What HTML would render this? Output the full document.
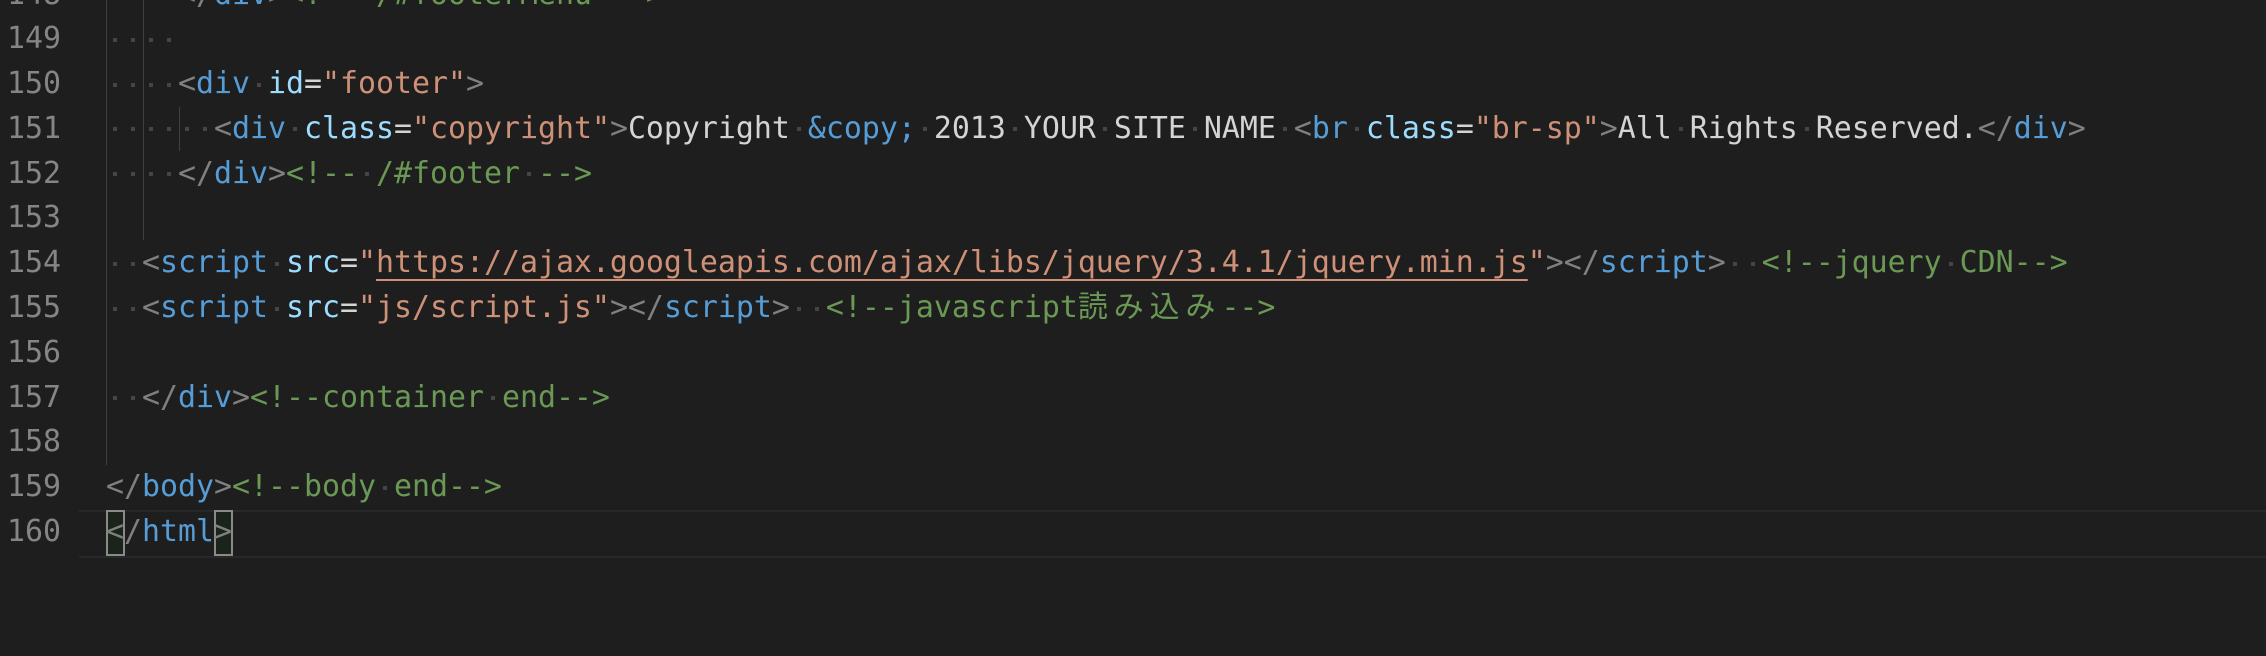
<!DOCTYPE html>
<html><head><meta charset="utf-8">
<style>
html,body{margin:0;padding:0;background:#1e1e1e;width:2266px;height:656px;overflow:hidden;}
.ed{position:absolute;left:0;top:-27.5px;width:2266px;font-family:"DejaVu Sans Mono","Noto Sans CJK JP",monospace;font-size:29.9px;line-height:44.8px;}
.ln{position:absolute;left:0;width:61px;text-align:right;color:#858585;}
.code{position:absolute;left:106px;color:#d4d4d4;}
.l{height:44.8px;white-space:pre;}
.s{display:inline-block;width:18px;height:20px;background:linear-gradient(#454545,#454545) no-repeat center/4px 4px;vertical-align:middle;}
.t{color:#569cd6}.a{color:#9cdcfe}.v{color:#ce9178}.c{color:#6a9955}.p{color:#808080}
.u{text-decoration:underline;text-decoration-color:#ce9178;text-underline-offset:7px;text-decoration-thickness:2px;}
.j{letter-spacing:6px;}
.g{position:absolute;width:1px;background:#404040;}
.cur{position:absolute;left:79px;right:0;top:510px;height:44px;border-top:2px solid #282828;border-bottom:2px solid #282828;}
.bb{position:absolute;top:510px;height:42px;border:2px solid #8a8a8a;background:#1b241b;box-sizing:content-box;}
</style></head><body>
<div class="cur"></div>
<div class="bb" style="left:106px;width:15px"></div>
<div class="bb" style="left:214px;width:15px"></div>
<div class="g" style="left:106px;top:0;height:465px"></div>
<div class="g" style="left:143px;top:0;height:240px"></div>
<div class="g" style="left:179px;top:107px;height:44px"></div>
<div class="ed">
<div class="ln"><div class="l">148</div><div class="l">149</div><div class="l">150</div><div class="l">151</div><div class="l">152</div><div class="l">153</div><div class="l">154</div><div class="l">155</div><div class="l">156</div><div class="l">157</div><div class="l">158</div><div class="l">159</div><div class="l">160</div></div>
<div class="code">
<div class="l"><span class="s"></span><span class="s"></span><span class="s"></span><span class="s"></span><span class="p">&lt;/</span><span class="t">div</span><span class="p">&gt;</span><span class="c">&lt;!--<span class="s"></span>/#footerMenu<span class="s"></span>--&gt;</span></div>
<div class="l"><span class="s"></span><span class="s"></span><span class="s"></span><span class="s"></span></div>
<div class="l"><span class="s"></span><span class="s"></span><span class="s"></span><span class="s"></span><span class="p">&lt;</span><span class="t">div</span><span class="s"></span><span class="a">id</span>=<span class="v">"footer"</span><span class="p">&gt;</span></div>
<div class="l"><span class="s"></span><span class="s"></span><span class="s"></span><span class="s"></span><span class="s"></span><span class="s"></span><span class="p">&lt;</span><span class="t">div</span><span class="s"></span><span class="a">class</span>=<span class="v">"copyright"</span><span class="p">&gt;</span>Copyright<span class="s"></span><span class="t">&amp;copy;</span><span class="s"></span>2013<span class="s"></span>YOUR<span class="s"></span>SITE<span class="s"></span>NAME<span class="s"></span><span class="p">&lt;</span><span class="t">br</span><span class="s"></span><span class="a">class</span>=<span class="v">"br-sp"</span><span class="p">&gt;</span>All<span class="s"></span>Rights<span class="s"></span>Reserved.<span class="p">&lt;/</span><span class="t">div</span><span class="p">&gt;</span></div>
<div class="l"><span class="s"></span><span class="s"></span><span class="s"></span><span class="s"></span><span class="p">&lt;/</span><span class="t">div</span><span class="p">&gt;</span><span class="c">&lt;!--<span class="s"></span>/#footer<span class="s"></span>--&gt;</span></div>
<div class="l"></div>
<div class="l"><span class="s"></span><span class="s"></span><span class="p">&lt;</span><span class="t">script</span><span class="s"></span><span class="a">src</span>=<span class="v">"<span class="u">https://ajax.googleapis.com/ajax/libs/jquery/3.4.1/jquery.min.js</span>"</span><span class="p">&gt;&lt;/</span><span class="t">script</span><span class="p">&gt;</span><span class="s"></span><span class="s"></span><span class="c">&lt;!--jquery<span class="s"></span>CDN--&gt;</span></div>
<div class="l"><span class="s"></span><span class="s"></span><span class="p">&lt;</span><span class="t">script</span><span class="s"></span><span class="a">src</span>=<span class="v">"js/script.js"</span><span class="p">&gt;&lt;/</span><span class="t">script</span><span class="p">&gt;</span><span class="s"></span><span class="s"></span><span class="c">&lt;!--javascript<span class="j">読み込み</span>--&gt;</span></div>
<div class="l"></div>
<div class="l"><span class="s"></span><span class="s"></span><span class="p">&lt;/</span><span class="t">div</span><span class="p">&gt;</span><span class="c">&lt;!--container<span class="s"></span>end--&gt;</span></div>
<div class="l"></div>
<div class="l"><span class="p">&lt;/</span><span class="t">body</span><span class="p">&gt;</span><span class="c">&lt;!--body<span class="s"></span>end--&gt;</span></div>
<div class="l"><span class="p">&lt;/</span><span class="t">html</span><span class="p">&gt;</span></div>
</div>
</div>
</body></html>
